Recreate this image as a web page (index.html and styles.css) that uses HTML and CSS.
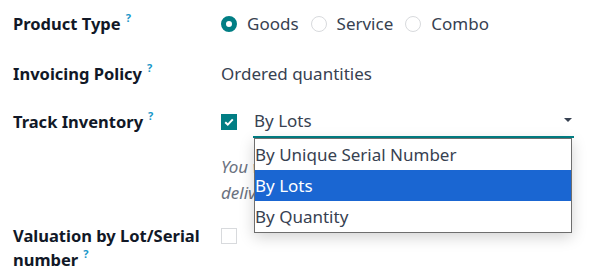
FILE: index.html
```html
<!DOCTYPE html>
<html>
<head>
<meta charset="utf-8">
<link rel="stylesheet" href="styles.css">
</head>
<body>
<div class="form">
  <div class="row r1">
    <div class="label">Product Type<sup class="tip">?</sup></div>
    <div class="value radios">
      <span class="radio on"></span><span class="opt">Goods</span>
      <span class="radio"></span><span class="opt">Service</span>
      <span class="radio"></span><span class="opt">Combo</span>
    </div>
  </div>
  <div class="row r2">
    <div class="label">Invoicing Policy<sup class="tip">?</sup></div>
    <div class="value">Ordered quantities</div>
  </div>
  <div class="row r3">
    <div class="label">Track Inventory<sup class="tip">?</sup></div>
    <div class="value track">
      <div class="trackline">
        <span class="check on"><svg width="10" height="8" viewBox="0 0 10 8"><path d="M1.2 4.2 L3.8 6.6 L8.8 1.4" fill="none" stroke="#fff" stroke-width="2"/></svg></span>
        <div class="select">
          <span class="selval">By Lots</span>
          <span class="caret"></span>
          <ul class="menu">
            <li>By Unique Serial Number</li>
            <li class="sel">By Lots</li>
            <li>By Quantity</li>
          </ul>
        </div>
      </div>
      <div class="note">You will be able to assign lots to your<br>deliveries and receipts.</div>
    </div>
  </div>
  <div class="row r4">
    <div class="label">Valuation by Lot/Serial number<sup class="tip">?</sup></div>
    <div class="value boxline"><span class="check"></span></div>
  </div>
</div>
</body>
</html>
```
FILE: styles.css
```css
html, body { margin: 0; padding: 0; background: #fff; }
body {
  font-family: "Noto Sans", "Open Sans", sans-serif;
  font-size: 17px;
  color: #374151;
}
.form { padding: 0 0 0 13px; }
.row { display: grid; grid-template-columns: 208px 1fr; align-items: start; }
.label {
  font-weight: 700;
  font-size: 16.5px;
  color: #111827;
  line-height: 24px;
}
.tip {
  color: #1a97c9;
  font-size: 11px;
  font-weight: 700;
  vertical-align: 8px;
  line-height: 0;
  margin-left: 5px;
}
.value { line-height: 24px; }
.r1 { padding-top: 12px; }
.r2 { padding-top: 26px; }
.r3 { padding-top: 24px; }
.r4 { padding-top: 18px; }
.radios { display: flex; align-items: center; }
.radio {
  width: 16px; height: 16px; box-sizing: border-box;
  border: 1px solid #d8dadd; border-radius: 50%;
  margin-right: 10px;
}
.radio.on { border: 5px solid #017e84; background: #fff; }
.opt { margin-right: 12px; }
.trackline { display: flex; align-items: center; height: 24px; }
.boxline { display: flex; align-items: center; height: 24px; }
.check {
  width: 16px; height: 16px; box-sizing: border-box;
  border: 1px solid #d8dadd; display: inline-flex; align-items: center; justify-content: center;
}
.check.on { background: #017e84; border-color: #017e84; margin-right: 16px; }
.select {
  position: relative;
  width: 320px;
  height: 24px;
  border-bottom: 2px solid #017e84;
  margin-top: 6px;
  line-height: 24px;
  padding-left: 1px;
}
.selval { position: relative; top: -3px; }
.caret {
  position: absolute; right: 2px; top: 6px;
  width: 0; height: 0;
  border-left: 4px solid transparent; border-right: 4px solid transparent;
  border-top: 4px solid #374151;
}
.menu {
  position: absolute; left: 1px; top: 26px;
  width: 316px;
  margin: 0; padding: 0; list-style: none;
  background: #fff;
  border: 1px solid #6e6e6e;
  box-shadow: 0 4px 14px rgba(0,0,0,0.18);
  z-index: 2;
}
.menu li { height: 31px; line-height: 31px; color: #374151; white-space: nowrap; }
.menu li.sel { background: #1a66d2; color: #fff; }
.note {
  font-style: italic; color: #6b7280; white-space: nowrap;
  line-height: 26px; margin-top: 20px;
}
.r4 .label { width: 200px; }
```
